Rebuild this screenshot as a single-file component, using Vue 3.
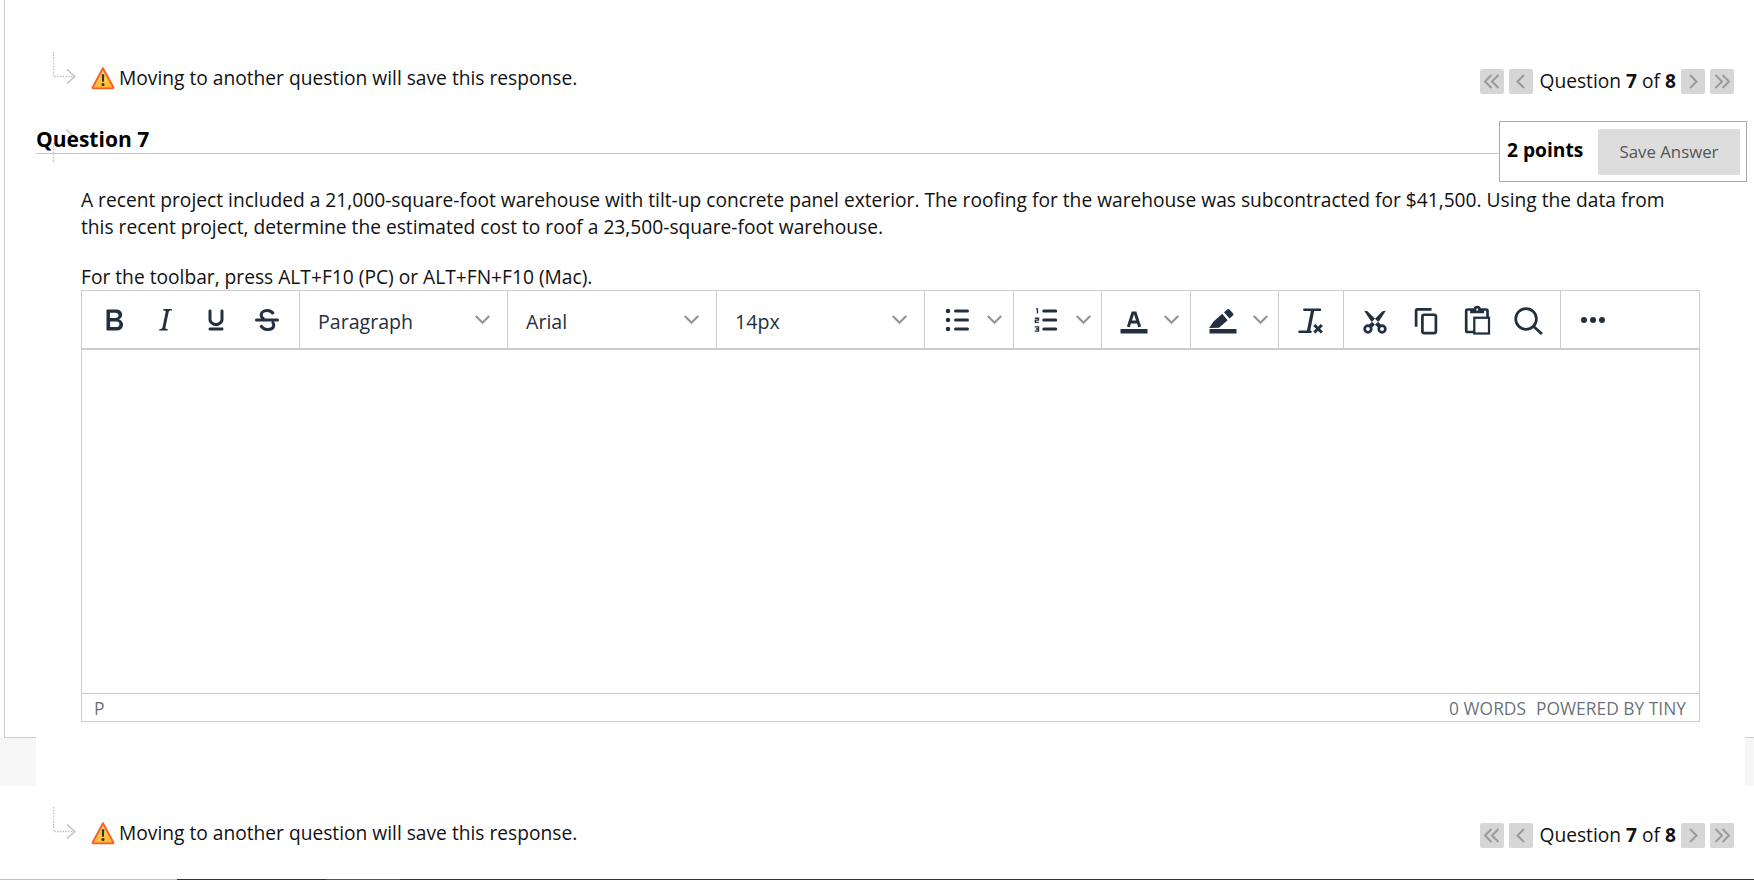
<script setup>
</script>

<template>
  <div class="page">
    <section class="panel">
      <div class="navrow top">
        <div class="msg">
          <svg class="elbow" width="24" height="33" viewBox="0 0 24 33">
            <path d="M.5 0V24.500H21" fill="none" stroke="#bdbdbd" stroke-width="1.400" stroke-dasharray="1.400 1.400" />
            <path d="M14 17.500l7.800 7-7.800 7" fill="none" stroke="#c4c4c4" stroke-width="1.600" />
          </svg>
          <svg class="warn" viewBox="0 0 22 22">
            <defs>
              <linearGradient id="wg" x1="0" y1="0" x2="0" y2="1">
                <stop offset="0" stop-color="#ffe071" />
                <stop offset="1" stop-color="#ffb52e" />
              </linearGradient>
            </defs>
            <path d="M11 2L20.500 19.600a.6.600 0 01-.5.900H2a.6.600 0 01-.5-.9z" fill="url(#wg)" stroke="#f2622a" stroke-width="1.800" stroke-linejoin="round" />
            <path d="M9.800 7.500h2.400l-.4 7h-1.600z" fill="#3a3226" />
            <circle cx="11" cy="17" r="1.400" fill="#3a3226" />
          </svg>
          <span>Moving to another question will save this response.</span>
        </div>
        <div class="pager">
          <span class="pbtn"><svg width="24" height="25" viewBox="0 0 24 25"><path d="M11.500 6L5 12.500 11.500 19M18.500 6L12 12.500 18.500 19" /></svg></span>
          <span class="pbtn"><svg width="24" height="25" viewBox="0 0 24 25"><path d="M15 6l-6.500 6.500L15 19" /></svg></span>
          <span class="ptext">Question <b>7</b> of <b>8</b></span>
          <span class="pbtn"><svg width="24" height="25" viewBox="0 0 24 25"><path d="M9 6l6.500 6.500L9 19" /></svg></span>
          <span class="pbtn"><svg width="24" height="25" viewBox="0 0 24 25"><path d="M5.500 6L12 12.500 5.500 19M12.500 6L19 12.500 12.500 19" /></svg></span>
        </div>
      </div>

      <div class="qhead">
        <div class="qtitle">
          <svg class="elbow2" width="24" height="34" viewBox="0 0 24 34">
            <path d="M.5 14V34" fill="none" stroke="#bdbdbd" stroke-width="1.400" stroke-dasharray="1.400 1.400" />
            <path d="M13 .5l7 6" fill="none" stroke="#c4c4c4" stroke-width="1.600" />
          </svg>
          <h2>Question 7</h2>
        </div>
        <div class="points">
          <strong>2 points</strong>
          <span class="save">Save Answer</span>
        </div>
      </div>

      <div class="body">
        <p class="q">A recent project included a 21,000-square-foot warehouse with tilt-up concrete panel exterior. The roofing for the warehouse was subcontracted for $41,500. Using the data from this recent project, determine the estimated cost to roof a 23,500-square-foot warehouse.</p>
        <p class="hint">For the toolbar, press ALT+F10 (PC) or ALT+FN+F10 (Mac).</p>

        <div class="editor">
          <div class="toolbar">
            <div class="grp g1">
              <span class="tb"><svg class="ic" viewBox="0 0 24 24"><path d="M7.800 19c-.3 0-.5 0-.6-.2l-.2-.5V5.700c0-.2 0-.4.200-.5l.6-.2h5c1.500 0 2.700.3 3.500 1 .7.600 1.100 1.400 1.100 2.500a3 3 0 01-.6 1.900c-.4.600-1 1-1.600 1.200.4.100.9.300 1.300.6s.8.700 1 1.200c.4.400.5 1 .5 1.600 0 1.300-.4 2.300-1.300 3-.8.700-2.100 1-3.800 1H7.800zm5-8.300c.6 0 1.200-.1 1.600-.5.400-.3.6-.7.6-1.300 0-1.100-.8-1.700-2.300-1.700H9.300v3.500h3.500zm.5 6c.7 0 1.300-.1 1.700-.4.400-.4.600-.9.600-1.500s-.2-1-.7-1.400c-.4-.3-1-.4-2-.4H9.400v3.700h3.900z" /></svg></span>
              <span class="tb"><svg class="ic" viewBox="0 0 24 24"><path d="M16.700 4.700l-.1.900h-.3c-.6 0-1 0-1.400.3-.3.300-.4.600-.5 1.100l-2.100 9.800v.6c0 .5.400.8 1.400.8h.2l-.2.8H8l.2-.8h.2c1.100 0 1.800-.5 2-1.500l2-9.800.1-.5c0-.6-.4-.8-1.400-.8h-.3l.2-.9h5.800z" /></svg></span>
              <span class="tb"><svg class="ic" viewBox="0 0 24 24"><path d="M16 5c.6 0 1 .4 1 1v5.500a4 4 0 01-.4 1.800l-1 1.400a5.300 5.300 0 01-5.500 1 5 5 0 01-1.600-1c-.5-.4-.8-.9-1.100-1.400a4 4 0 01-.4-1.800V6c0-.6.400-1 1-1s1 .4 1 1v5.500c0 .3 0 .6.200 1l.6.700a3.300 3.300 0 002.200.8 3.400 3.400 0 002.200-.8c.3-.2.400-.5.600-.8l.2-.9V6c0-.6.400-1 1-1zM8 17h8c.6 0 1 .4 1 1s-.4 1-1 1H8a1 1 0 010-2z" /></svg></span>
              <span class="tb"><svg class="ic" viewBox="0 0 24 24"><path class="line s" d="M16.300 8c-.9-1.500-2.300-2.300-4.200-2.300-2.500 0-4 1.300-4 3 0 1.300.8 2.100 2 2.700M7.800 15.500c.9 1.700 2.400 2.800 4.500 2.800 2.600 0 4.200-1.200 4.200-3 0-.9-.4-1.700-1.200-2.300" /><path d="M5 11h14a1 1 0 010 2H5a1 1 0 010-2z" /></svg></span>
            </div>
            <div class="grp sel s1"><span>Paragraph</span><svg class="chev" viewBox="0 0 15 15"><path d="M.8 4l6.700 6.700L14.200 4" /></svg></div>
            <div class="grp sel s2"><span>Arial</span><svg class="chev" viewBox="0 0 15 15"><path d="M.8 4l6.700 6.700L14.200 4" /></svg></div>
            <div class="grp sel s1"><span>14px</span><svg class="chev" viewBox="0 0 15 15"><path d="M.8 4l6.700 6.700L14.200 4" /></svg></div>

            <div class="grp split w89">
              <span class="tb"><svg class="ic" viewBox="0 0 24 24"><path d="M11 5h8a1 1 0 010 2h-8a1 1 0 010-2zm0 6h8a1 1 0 010 2h-8a1 1 0 010-2zm0 6h8a1 1 0 010 2h-8a1 1 0 010-2z" /><circle cx="6" cy="6" r="1.500" /><circle cx="6" cy="12" r="1.500" /><circle cx="6" cy="18" r="1.500" /></svg></span>
              <svg class="chev" viewBox="0 0 15 15"><path d="M.8 4l6.700 6.700L14.200 4" /></svg>
            </div>
            <div class="grp split">
              <span class="tb"><svg class="ic" viewBox="0 0 24 24"><path d="M10.500 5h8a1 1 0 010 2h-8a1 1 0 010-2zm0 6h8a1 1 0 010 2h-8a1 1 0 010-2zm0 6h8a1 1 0 010 2h-8a1 1 0 010-2z" /><path class="thin" d="M5.300 4.600H6.300V7.600M4.600 10.800H7V12.100H4.900V13.600H7.200M4.500 16.600H7V19.400H4.500M5.200 18H7" /></svg></span>
              <svg class="chev" viewBox="0 0 15 15"><path d="M.8 4l6.700 6.700L14.200 4" /></svg>
            </div>
            <div class="grp split w89">
              <span class="tb"><svg class="ic" viewBox="0 0 24 24"><path class="thick" d="M8.200 16.600L11.200 7.300h1.600l3 9.300M9.400 13.400h5.200" /><path d="M3 18h18v3H3z" /></svg></span>
              <svg class="chev" viewBox="0 0 15 15"><path d="M.8 4l6.700 6.700L14.200 4" /></svg>
            </div>
            <div class="grp split">
              <span class="tb"><svg class="ic" viewBox="0 0 24 24"><path d="M9.300 17.200L5.700 13 11.500 7.900 15.100 12.100zM2.700 17.300L5.700 13 9.300 17.200zM16.300 11L12.700 6.800 15 4.900a1 1 0 011.400.1l2.300 2.600a1 1 0 01-.1 1.400z" /><path d="M3 18h18v3H3z" /></svg></span>
              <svg class="chev" viewBox="0 0 15 15"><path d="M.8 4l6.700 6.700L14.200 4" /></svg>
            </div>
            <div class="grp w65">
              <span class="tb"><svg class="ic" viewBox="0 0 24 24"><path d="M7.500 4.400h10.500a.8.800 0 010 1.600H7.500a.8.800 0 010-1.600zM12 5.500h2.200l-2.800 14H9.200z" /><path d="M4.300 19h7.400a.8.800 0 010 1.600H4.300a.8.800 0 010-1.600z" /><path class="thick" d="M14.200 15.300l5 5M19.200 15.300l-5 5" /></svg></span>
            </div>
            <div class="grp w217">
              <span class="tb"><svg class="ic" viewBox="0 0 24 24"><circle class="line thickring" cx="7.300" cy="18" r="2.200" /><circle class="line thickring" cx="16.700" cy="18" r="2.200" /><path d="M4.800 5.800L7 6.200 16 15.200 14.400 17.300 9 12.400zM19.200 5.800L17 6.200 8 15.200 9.600 17.300 15 12.400z" /></svg></span>
              <span class="tb"><svg class="ic" viewBox="0 0 24 24"><path class="line wide" d="M15.700 4.900H6.200a.8.800 0 00-.8.800V16.500" /><rect class="line wide" x="9.600" y="8.500" width="9" height="12.200" rx="1.200" /></svg></span>
              <span class="tb"><svg class="ic" viewBox="0 0 24 24"><path class="line wide" d="M8.300 5H5.800a1 1 0 00-1 1v13a1 1 0 001 1H10M16.200 5H18a1 1 0 011 1v4.400M8.300 6.600h7.500V5h-2.100a1.500 1.500 0 00-3.100 0h-2.300z" /><rect class="line" x="10.200" y="10.500" width="9.800" height="10.500" /></svg></span>
              <span class="tb"><svg class="ic" viewBox="0 0 24 24"><circle class="line wide" cx="10.700" cy="11.300" r="6.900" /><path class="line wide" d="M15.800 16.300l5.500 5" /></svg></span>
            </div>
            <div class="grp last">
              <span class="tb"><svg class="ic" viewBox="0 0 24 24"><circle cx="6" cy="12" r="2" /><circle cx="12" cy="12" r="2" /><circle cx="18" cy="12" r="2" /></svg></span>
            </div>
          </div>
          <div class="area"></div>
          <div class="status">
            <span>P</span>
            <span class="right"><span>0 words</span><span>Powered by Tiny</span></span>
          </div>
        </div>
      </div>
    </section>

    <div class="strip">
      <div class="side left"><i></i></div>
      <div class="mid"></div>
      <div class="side rightside"><i></i></div>
    </div>

    <div class="navrow bottom">
      <div class="msg">
        <svg class="elbow" width="24" height="33" viewBox="0 0 24 33">
          <path d="M.5 0V24.500H21" fill="none" stroke="#bdbdbd" stroke-width="1.400" stroke-dasharray="1.400 1.400" />
          <path d="M14 17.500l7.800 7-7.800 7" fill="none" stroke="#c4c4c4" stroke-width="1.600" />
        </svg>
        <svg class="warn" viewBox="0 0 22 22">
          <path d="M11 2L20.500 19.600a.6.600 0 01-.5.900H2a.6.600 0 01-.5-.9z" fill="url(#wg)" stroke="#f2622a" stroke-width="1.800" stroke-linejoin="round" />
          <path d="M9.800 7.500h2.400l-.4 7h-1.600z" fill="#3a3226" />
          <circle cx="11" cy="17" r="1.400" fill="#3a3226" />
        </svg>
        <span>Moving to another question will save this response.</span>
      </div>
      <div class="pager">
        <span class="pbtn"><svg width="24" height="25" viewBox="0 0 24 25"><path d="M11.500 6L5 12.500 11.500 19M18.500 6L12 12.500 18.500 19" /></svg></span>
        <span class="pbtn"><svg width="24" height="25" viewBox="0 0 24 25"><path d="M15 6l-6.500 6.500L15 19" /></svg></span>
        <span class="ptext">Question <b>7</b> of <b>8</b></span>
        <span class="pbtn"><svg width="24" height="25" viewBox="0 0 24 25"><path d="M9 6l6.500 6.500L9 19" /></svg></span>
        <span class="pbtn"><svg width="24" height="25" viewBox="0 0 24 25"><path d="M5.500 6L12 12.500 5.500 19M12.500 6L19 12.500 12.500 19" /></svg></span>
      </div>
    </div>

    <div class="foot">
      <i class="f1"></i><i class="f2"></i><i class="f3"></i><i class="f4"></i>
    </div>
  </div>
</template>

<style scoped>
.page {
  height: 880px;
  width: 1754px;
  overflow: hidden;
  display: flex;
  flex-direction: column;
  background: #fff;
  font-family: "Open Sans", "Noto Sans", sans-serif;
  font-size: 19.2px;
  color: #111;
}
.panel {
  box-sizing: border-box;
  height: 737px;
  margin-left: 4px;
  padding-top: 52px;
  border-left: 1px solid #ccc;
}
.navrow {
  display: flex;
  justify-content: space-between;
  align-items: flex-end;
  height: 43px;
  padding-right: 20px;
}
.navrow.top {
  padding-left: 48px;
}
.navrow.bottom {
  height: 42px;
  margin-top: 21px;
  padding-left: 53px;
}
.msg {
  align-self: flex-start;
  display: flex;
  align-items: flex-start;
  line-height: 24px;
}
.msg span {
  padding-top: 14px;
}
.elbow {
  flex: none;
}
.warn {
  flex: none;
  width: 24px;
  height: 24px;
  margin: 14px 4px 0 14px;
}
.pager {
  display: flex;
  align-items: center;
  gap: 5px;
}
.pbtn {
  width: 24px;
  height: 25px;
  background: #d6d6d6;
  border-radius: 2px;
  display: block;
}
.pbtn svg {
  display: block;
  fill: none;
  stroke: #9a9a9a;
  stroke-width: 2;
}
.ptext {
  padding: 0 0 2px 1px;
  line-height: 25px;
}
.ptext b {
  font-weight: 700;
}
.qhead {
  display: flex;
  align-items: flex-start;
  margin: 26px 7px 0 31px;
}
.qtitle {
  position: relative;
  flex: 1;
  height: 33px;
  border-bottom: 1px solid #c8c8c8;
  box-sizing: border-box;
}
.qtitle h2 {
  position: relative;
  margin: 0;
  font-size: 21px;
  line-height: 36px;
  font-weight: 700;
  color: #000;
}
.elbow2 {
  position: absolute;
  left: 17px;
  top: 8px;
  overflow: visible;
}
.points {
  flex: none;
  box-sizing: border-box;
  width: 248px;
  height: 61px;
  border: 1px solid #aaa;
  display: flex;
  justify-content: space-between;
  align-items: center;
  padding: 0 6px 0 7px;
}
.points strong {
  font-size: 19.2px;
  color: #000;
  padding-bottom: 5px;
}
.save {
  box-sizing: border-box;
  width: 142px;
  height: 46px;
  background: #ddd;
  border-radius: 2px;
  color: #555;
  font-size: 16.8px;
  display: flex;
  align-items: center;
  justify-content: center;
}
.body {
  padding: 4px 54px 0 76px;
}
.q {
  margin: 0 0 24px;
  line-height: 27px;
}
.hint {
  margin: 0;
  line-height: 26px;
}
.editor {
  box-sizing: border-box;
  height: 432px;
  border: 1px solid #ccc;
  display: flex;
  flex-direction: column;
  color: #222f3e;
}
.toolbar {
  flex: none;
  height: 59px;
  box-sizing: border-box;
  border-bottom: 2px solid #ccc;
  display: flex;
}
.grp {
  flex: none;
  box-sizing: border-box;
  height: 57px;
  border-right: 1px solid #ccc;
  display: flex;
  align-items: center;
  padding: 0 7px;
}
.g1 {
  width: 218px;
}
.sel {
  padding: 0 17px 0 18px;
  justify-content: space-between;
  font-size: 19.6px;
}
.sel span {
  padding-top: 3px;
}
.s1 {
  width: 208px;
}
.s2 {
  width: 209px;
}
.split {
  width: 88px;
}
.split .chev {
  margin-left: 4px;
}
.w89 {
  width: 89px;
}
.w65 {
  width: 65px;
}
.w217 {
  width: 217px;
  padding: 0 6px;
}
.last {
  border-right: none;
}
.tb {
  flex: none;
  box-sizing: border-box;
  width: 51px;
  height: 57px;
  padding-right: 2px;
  display: flex;
  align-items: center;
  justify-content: center;
}
.ic {
  width: 36px;
  height: 36px;
  fill: #222f3e;
}
.ic .thin {
  fill: none;
  stroke: #222f3e;
  stroke-width: .9;
}
.ic .thick {
  fill: none;
  stroke: #222f3e;
  stroke-width: 2;
}
.ic .line {
  fill: none;
  stroke: #222f3e;
  stroke-width: 1.5;
}
.ic .wide,
.ic .thickring {
  stroke-width: 1.800;
}
.ic .s {
  stroke-width: 2;
}
.chev {
  flex: none;
  width: 15px;
  height: 15px;
  margin-top: -1px;
  fill: none;
  stroke: #222f3e;
  stroke-opacity: .5;
  stroke-width: 2.300;
}
.area {
  flex: 1;
}
.status {
  flex: none;
  box-sizing: border-box;
  height: 28px;
  border-top: 1px solid #ccc;
  display: flex;
  justify-content: space-between;
  align-items: center;
  padding: 0 13px 0 12px;
  font-size: 17.400px;
  color: rgba(34, 47, 62, .7);
}
.right {
  display: flex;
  gap: 10px;
  text-transform: uppercase;
}
.strip {
  flex: none;
  height: 49px;
  display: flex;
}
.side {
  flex: none;
  background: #f6f6f6;
}
.side i {
  display: block;
  height: 1px;
  background: #ccc;
}
.side.left {
  width: 36px;
}
.side.left i {
  margin-left: 4px;
}
.side.rightside {
  width: 9px;
}
.mid {
  flex: 1;
}
.foot {
  margin-top: auto;
  flex: none;
  height: 1px;
  display: flex;
}
.foot i {
  display: block;
  height: 1px;
}
.f1 {
  width: 177px;
  background: #c0c0c0;
}
.f2 {
  width: 149px;
  background: #333;
}
.f3 {
  width: 74px;
  background: #555;
}
.f4 {
  flex: 1;
  background: #333;
}
</style>
